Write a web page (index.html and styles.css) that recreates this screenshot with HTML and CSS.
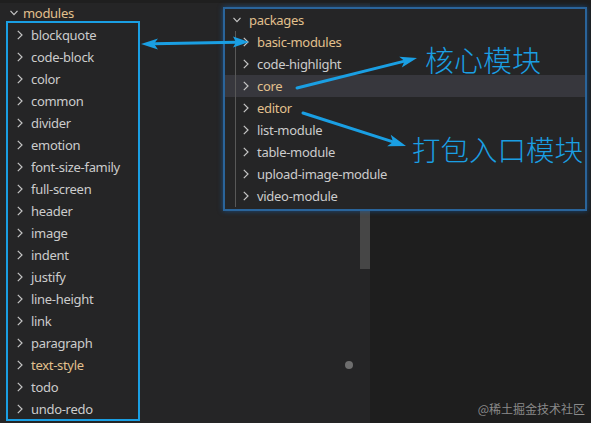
FILE: index.html
```html
<!DOCTYPE html>
<html lang="zh">
<head>
<meta charset="utf-8">
<title>packages</title>
<link rel="stylesheet" href="styles.css">
</head>
<body>
<div class="workbench">
  <aside class="sidebar">
    <div class="topstrip"></div>
    <div class="row folder">
      <svg class="chev-down" width="8" height="6" viewBox="0 0 8 6"><polyline points="0.5,0.8 4,4.6 7.5,0.8"/></svg>
      <span class="label mod">modules</span>
    </div>
    <div class="children">
      <div class="row item"><svg class="chev" width="6" height="10" viewBox="0 0 6 10"><polyline points="0.8,0.8 5,5 0.8,9.2"/></svg><span class="label">blockquote</span></div>
      <div class="row item"><svg class="chev" width="6" height="10" viewBox="0 0 6 10"><polyline points="0.8,0.8 5,5 0.8,9.2"/></svg><span class="label">code-block</span></div>
      <div class="row item"><svg class="chev" width="6" height="10" viewBox="0 0 6 10"><polyline points="0.8,0.8 5,5 0.8,9.2"/></svg><span class="label">color</span></div>
      <div class="row item"><svg class="chev" width="6" height="10" viewBox="0 0 6 10"><polyline points="0.8,0.8 5,5 0.8,9.2"/></svg><span class="label">common</span></div>
      <div class="row item"><svg class="chev" width="6" height="10" viewBox="0 0 6 10"><polyline points="0.8,0.8 5,5 0.8,9.2"/></svg><span class="label">divider</span></div>
      <div class="row item"><svg class="chev" width="6" height="10" viewBox="0 0 6 10"><polyline points="0.8,0.8 5,5 0.8,9.2"/></svg><span class="label">emotion</span></div>
      <div class="row item"><svg class="chev" width="6" height="10" viewBox="0 0 6 10"><polyline points="0.8,0.8 5,5 0.8,9.2"/></svg><span class="label">font-size-family</span></div>
      <div class="row item"><svg class="chev" width="6" height="10" viewBox="0 0 6 10"><polyline points="0.8,0.8 5,5 0.8,9.2"/></svg><span class="label">full-screen</span></div>
      <div class="row item"><svg class="chev" width="6" height="10" viewBox="0 0 6 10"><polyline points="0.8,0.8 5,5 0.8,9.2"/></svg><span class="label">header</span></div>
      <div class="row item"><svg class="chev" width="6" height="10" viewBox="0 0 6 10"><polyline points="0.8,0.8 5,5 0.8,9.2"/></svg><span class="label">image</span></div>
      <div class="row item"><svg class="chev" width="6" height="10" viewBox="0 0 6 10"><polyline points="0.8,0.8 5,5 0.8,9.2"/></svg><span class="label">indent</span></div>
      <div class="row item"><svg class="chev" width="6" height="10" viewBox="0 0 6 10"><polyline points="0.8,0.8 5,5 0.8,9.2"/></svg><span class="label">justify</span></div>
      <div class="row item"><svg class="chev" width="6" height="10" viewBox="0 0 6 10"><polyline points="0.8,0.8 5,5 0.8,9.2"/></svg><span class="label">line-height</span></div>
      <div class="row item"><svg class="chev" width="6" height="10" viewBox="0 0 6 10"><polyline points="0.8,0.8 5,5 0.8,9.2"/></svg><span class="label">link</span></div>
      <div class="row item"><svg class="chev" width="6" height="10" viewBox="0 0 6 10"><polyline points="0.8,0.8 5,5 0.8,9.2"/></svg><span class="label">paragraph</span></div>
      <div class="row item"><svg class="chev" width="6" height="10" viewBox="0 0 6 10"><polyline points="0.8,0.8 5,5 0.8,9.2"/></svg><span class="label mod">text-style</span></div>
      <div class="row item"><svg class="chev" width="6" height="10" viewBox="0 0 6 10"><polyline points="0.8,0.8 5,5 0.8,9.2"/></svg><span class="label">todo</span></div>
      <div class="row item"><svg class="chev" width="6" height="10" viewBox="0 0 6 10"><polyline points="0.8,0.8 5,5 0.8,9.2"/></svg><span class="label">undo-redo</span></div>
    </div>
    <div class="scroll-thumb"></div>
    <div class="dot"></div>
  </aside>
  <main class="editor"></main>

  <section class="popup">
    <div class="prow pfolder">
      <svg class="chev-down" width="8" height="6" viewBox="0 0 8 6"><polyline points="0.5,0.8 4,4.6 7.5,0.8"/></svg>
      <span class="label mod">packages</span>
    </div>
    <div class="prow pitem"><span class="guide"></span><svg class="chev" width="6" height="10" viewBox="0 0 6 10"><polyline points="0.8,0.8 5,5 0.8,9.2"/></svg><span class="label mod">basic-modules</span></div>
    <div class="prow pitem"><span class="guide"></span><svg class="chev" width="6" height="10" viewBox="0 0 6 10"><polyline points="0.8,0.8 5,5 0.8,9.2"/></svg><span class="label">code-highlight</span></div>
    <div class="prow pitem hover"><span class="guide"></span><svg class="chev" width="6" height="10" viewBox="0 0 6 10"><polyline points="0.8,0.8 5,5 0.8,9.2"/></svg><span class="label mod">core</span></div>
    <div class="prow pitem"><span class="guide"></span><svg class="chev" width="6" height="10" viewBox="0 0 6 10"><polyline points="0.8,0.8 5,5 0.8,9.2"/></svg><span class="label mod">editor</span></div>
    <div class="prow pitem"><span class="guide"></span><svg class="chev" width="6" height="10" viewBox="0 0 6 10"><polyline points="0.8,0.8 5,5 0.8,9.2"/></svg><span class="label">list-module</span></div>
    <div class="prow pitem"><span class="guide"></span><svg class="chev" width="6" height="10" viewBox="0 0 6 10"><polyline points="0.8,0.8 5,5 0.8,9.2"/></svg><span class="label">table-module</span></div>
    <div class="prow pitem"><span class="guide"></span><svg class="chev" width="6" height="10" viewBox="0 0 6 10"><polyline points="0.8,0.8 5,5 0.8,9.2"/></svg><span class="label">upload-image-module</span></div>
    <div class="prow pitem"><span class="guide"></span><svg class="chev" width="6" height="10" viewBox="0 0 6 10"><polyline points="0.8,0.8 5,5 0.8,9.2"/></svg><span class="label">video-module</span></div>
  </section>

  <svg class="arrows" width="591" height="423" viewBox="0 0 591 423">
    <line x1="154" y1="43.8" x2="236" y2="42.2"/>
    <polygon points="141,44 158,38.4 154,43.8 158,49.4"/>
    <polygon points="249,42 233,36.6 236,42.2 233,47.6"/>
    <line x1="297" y1="88" x2="404.6" y2="61.1"/>
    <polygon points="417,58 401.8,67.5 404.6,61.1 399.2,56.8"/>
    <line x1="303" y1="113" x2="393.1" y2="141.9"/>
    <polygon points="406,146 387.1,146.2 393.1,141.9 390.7,134.8"/>
  </svg>
  <div class="note note-core">核心模块</div>
  <div class="note note-entry">打包入口模块</div>
  <div class="watermark">@稀土掘金技术社区</div>
</div>
</body>
</html>
```

FILE: styles.css
```css
* { box-sizing: border-box; }
html, body { margin: 0; padding: 0; }
body {
  background: #1e1e1e;
  font-family: "Noto Sans", "Liberation Sans", sans-serif;
  font-size: 13px;
  letter-spacing: -0.3px;
  color: #cccccc;
}
.workbench {
  position: relative;
  width: 591px;
  height: 423px;
  overflow: hidden;
  display: flex;
}
.sidebar {
  position: relative;
  width: 370px;
  height: 423px;
  background: #252526;
  flex: none;
}
.editor {
  flex: 1;
  background: #1e1e1e;
}
.topstrip {
  height: 3px;
  background: #1f1f1f;
}
.row {
  height: 22px;
  display: flex;
  align-items: center;
  white-space: nowrap;
}
.folder {
  height: 18px;
  padding-left: 10px;
  padding-top: 1px;
  gap: 5px;
}
.label { line-height: 22px; }
.mod { color: #e2c08d; }
.chev-down polyline, .chev polyline {
  fill: none;
  stroke: #c5c5c5;
  stroke-width: 1.2;
}
.children {
  margin-left: 6px;
  width: 134px;
  border: 2px solid #1a9fe3;
}
.item {
  padding-left: 9px;
  padding-top: 2px;
  gap: 8px;
}
.scroll-thumb {
  position: absolute;
  left: 360px;
  top: 150px;
  width: 10px;
  height: 119px;
  background: #464646;
}
.dot {
  position: absolute;
  left: 345px;
  top: 361px;
  width: 8px;
  height: 8px;
  border-radius: 50%;
  background: #6e6e6e;
}
.popup {
  position: absolute;
  left: 223px;
  top: 7px;
  width: 364px;
  height: 204px;
  background: #252526;
  border: 2px solid #2a649a;
  box-shadow: 0 0 5px rgba(20, 110, 200, 0.55);
}
.prow {
  height: 22px;
  display: flex;
  align-items: center;
  white-space: nowrap;
}
.pfolder {
  padding-left: 8px;
  gap: 8px;
}
.pitem {
  padding-left: 10px;
}
.pitem .guide {
  width: 1px;
  height: 22px;
  background: #585858;
  margin-right: 7px;
}
.pitem .chev { margin-right: 8px; }
.hover { background: #37373d; }
.arrows {
  position: absolute;
  left: 0;
  top: 0;
  pointer-events: none;
}
.arrows line {
  stroke: #1a9fe3;
  stroke-width: 3;
  stroke-linecap: round;
}
.arrows polygon { fill: #1a9fe3; }
.note {
  position: absolute;
  color: #1a9fe3;
  font-family: "Noto Sans CJK SC", sans-serif;
  font-weight: 300;
  font-size: 29px;
  line-height: 29px;
  letter-spacing: 0;
  white-space: nowrap;
}
.note-core { left: 425px; top: 45px; }
.note-entry { left: 412px; top: 134px; font-size: 28.5px; }
.watermark {
  position: absolute;
  right: 6px;
  bottom: 6px;
  font-family: "Noto Sans CJK SC", sans-serif;
  font-size: 12px;
  letter-spacing: 0;
  color: #8a8a8a;
}
```
